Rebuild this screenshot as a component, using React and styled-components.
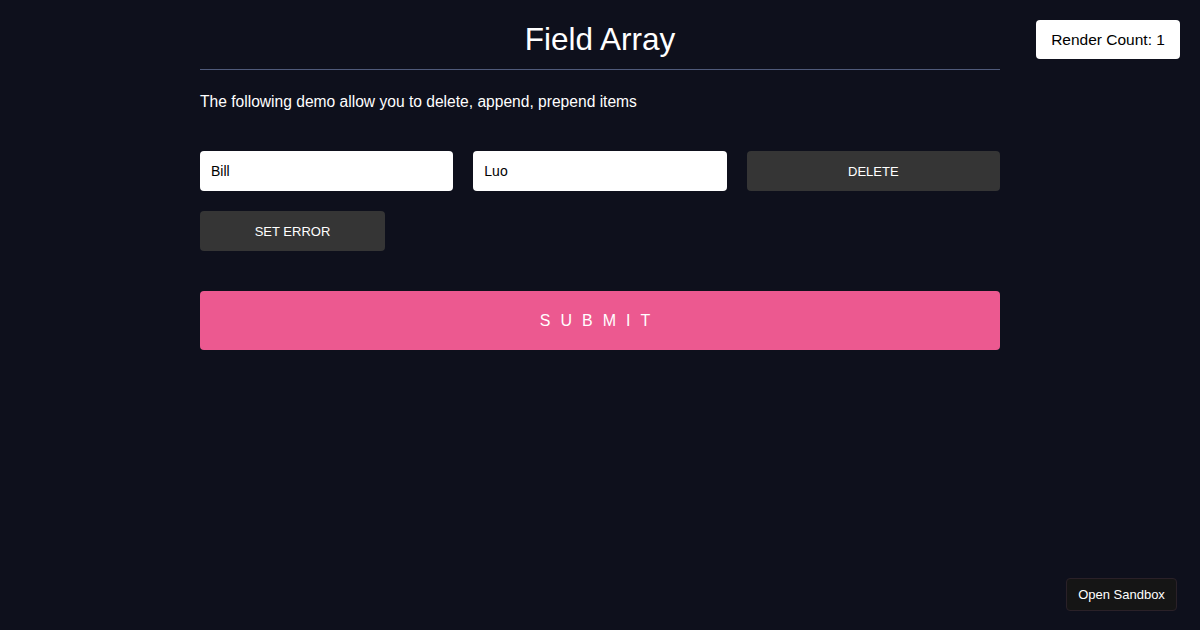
import React from "react";
import styled, { createGlobalStyle } from "styled-components";

const GlobalStyle = createGlobalStyle`
  html, body {
    margin: 0;
    padding: 0;
    background: #0e101c;
    color: #fff;
    font-family: "Liberation Sans", Arial, sans-serif;
  }
  * {
    box-sizing: border-box;
  }
`;

const Page = styled.div`
  position: relative;
  min-height: 630px;
`;

const Container = styled.form`
  max-width: 800px;
  margin: 0 auto;
  display: flex;
  flex-direction: column;
`;

const Title = styled.h1`
  margin: 0;
  padding: 20px 0 11px;
  font-size: 31.5px;
  font-weight: 100;
  line-height: 38px;
  text-align: center;
  border-bottom: 1px solid #4f5a7a;
`;

const Intro = styled.p`
  margin: 22px 0 39px;
  font-size: 15.6px;
  line-height: 20px;
  color: #fff;
`;

const Row = styled.div`
  display: grid;
  grid-template-columns: repeat(3, 1fr);
  gap: 20px;
`;

const Input = styled.input`
  height: 40px;
  border: none;
  border-radius: 4px;
  padding: 0 11px;
  font-family: inherit;
  font-size: 14px;
  color: #000;
  background: #fff;
  outline: none;
`;

const Button = styled.button`
  height: 40px;
  width: ${(p) => p.width || "auto"};
  border: none;
  border-radius: 4px;
  background: #353535;
  color: #fff;
  font-family: inherit;
  font-size: 13px;
  text-transform: uppercase;
  cursor: pointer;
`;

const Actions = styled.div`
  display: flex;
  margin-top: 20px;
`;

const Submit = styled.button`
  margin-top: 40px;
  height: 59px;
  border: none;
  border-radius: 4px;
  background: #ec5990;
  color: #fff;
  font-family: inherit;
  font-size: 16px;
  letter-spacing: 10px;
  text-transform: uppercase;
  cursor: pointer;
`;

const RenderCount = styled.div`
  position: absolute;
  top: 20px;
  right: 20px;
  width: 144px;
  height: 39px;
  display: flex;
  align-items: center;
  justify-content: center;
  background: #fff;
  color: #000;
  border-radius: 4px;
  font-size: 15.5px;
`;

const SandboxLink = styled.a`
  position: absolute;
  right: 23px;
  bottom: 19px;
  width: 111px;
  height: 33px;
  display: flex;
  align-items: center;
  justify-content: center;
  background: #151515;
  border: 1px solid #2a2128;
  border-radius: 4px;
  color: #fff;
  font-size: 13px;
  text-decoration: none;
`;

export default function App() {
  return (
    <Page>
      <GlobalStyle />
      <RenderCount>Render Count: 1</RenderCount>
      <Container onSubmit={(e) => e.preventDefault()}>
        <Title>Field Array</Title>
        <Intro>The following demo allow you to delete, append, prepend items</Intro>
        <Row>
          <Input defaultValue="Bill" />
          <Input defaultValue="Luo" />
          <Button type="button">Delete</Button>
        </Row>
        <Actions>
          <Button type="button" width="185px">Set Error</Button>
        </Actions>
        <Submit type="submit">Submit</Submit>
      </Container>
      <SandboxLink href="#">Open Sandbox</SandboxLink>
    </Page>
  );
}
